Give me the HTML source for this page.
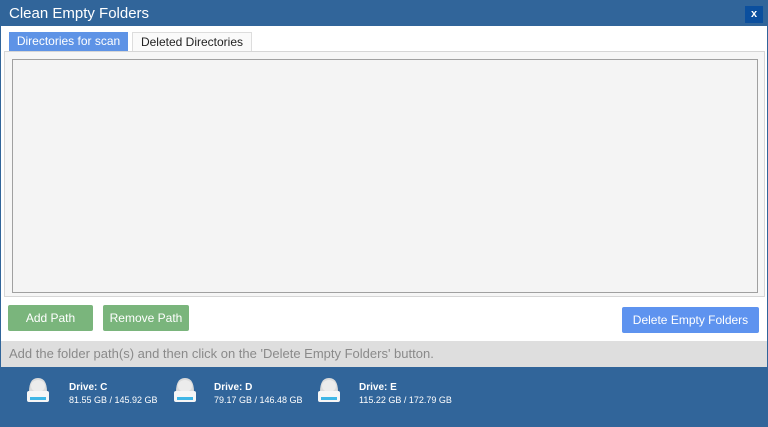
<!DOCTYPE html>
<html><head><style>
*{margin:0;padding:0;box-sizing:border-box}
body{width:768px;height:427px;overflow:hidden;background:#31659a;font-family:"Segoe UI","Liberation Sans",sans-serif;position:relative}
.title{position:absolute;left:9px;top:5px;color:#fff;font-size:15px}
.x{position:absolute;left:745px;top:6px;width:18px;height:17px;background:#0b4f9e;color:#fff;font-size:11px;font-weight:bold;text-align:center;line-height:16px}
.main{position:absolute;left:1px;top:26px;width:766px;height:315px;background:#fff}
.tab{position:absolute;top:6px;height:20px;font-size:12px;line-height:19px;text-align:center}
.t1{left:8px;width:119px;background:#5e93e6;color:#fff}
.t2{left:131px;width:120px;background:#fafafa;border:1px solid #ddd;border-bottom:none;color:#222}
.panel{position:absolute;left:3px;top:25px;width:761px;height:246px;border:1px solid #d6d6d6;background:#f6f6f6}
.inner{position:absolute;left:7px;top:7px;width:746px;height:234px;border:1px solid #a0a0a0;background:#f4f4f4}
.btn{position:absolute;top:279px;height:26px;border-radius:2px;color:#fff;font-size:12px;line-height:26px;text-align:center}
.g{background:#7ab57c}
.status{position:absolute;left:1px;top:341px;width:766px;height:26px;background:#dedede;color:#8a8a8a;font-size:13px;line-height:26px;padding-left:8px}
.drive{position:absolute;top:377px}
.dl{position:absolute;top:381px;color:#fff;font-size:9px;line-height:12px}
.dl b{font-size:10px}
</style></head><body>
<div class="title">Clean Empty Folders</div>
<div class="x">x</div>
<div class="main">
<div class="tab t1">Directories for scan</div>
<div class="tab t2">Deleted Directories</div>
<div class="panel"><div class="inner"></div></div>
<div class="btn g" style="left:7px;width:85px">Add Path</div>
<div class="btn g" style="left:102px;width:86px">Remove Path</div>
<div class="btn" style="left:621px;width:137px;top:281px;background:#5e93ef">Delete Empty Folders</div>
</div>
<div class="status">Add the folder path(s) and then click on the 'Delete Empty Folders' button.</div>
<svg class="drive" style="left:27px" width="22" height="26" viewBox="0 0 22 26"><path d="M2 15 Q2 1 11 1 Q20 1 20 15Z" fill="#dcdcdc"/><ellipse cx="11" cy="9" rx="7" ry="6" fill="#ececec"/><rect x="0" y="14" width="22" height="11" rx="2" fill="#f6f6f6"/><rect x="3" y="20" width="16" height="3" fill="#3fb6e6"/></svg>
<div class="dl" style="left:69px"><b>Drive: C</b><br>81.55 GB / 145.92 GB</div>
<svg class="drive" style="left:174px" width="22" height="26" viewBox="0 0 22 26"><path d="M2 15 Q2 1 11 1 Q20 1 20 15Z" fill="#dcdcdc"/><ellipse cx="11" cy="9" rx="7" ry="6" fill="#ececec"/><rect x="0" y="14" width="22" height="11" rx="2" fill="#f6f6f6"/><rect x="3" y="20" width="16" height="3" fill="#3fb6e6"/></svg>
<div class="dl" style="left:214px"><b>Drive: D</b><br>79.17 GB / 146.48 GB</div>
<svg class="drive" style="left:318px" width="22" height="26" viewBox="0 0 22 26"><path d="M2 15 Q2 1 11 1 Q20 1 20 15Z" fill="#dcdcdc"/><ellipse cx="11" cy="9" rx="7" ry="6" fill="#ececec"/><rect x="0" y="14" width="22" height="11" rx="2" fill="#f6f6f6"/><rect x="3" y="20" width="16" height="3" fill="#3fb6e6"/></svg>
<div class="dl" style="left:359px"><b>Drive: E</b><br>115.22 GB / 172.79 GB</div>
</body></html>
